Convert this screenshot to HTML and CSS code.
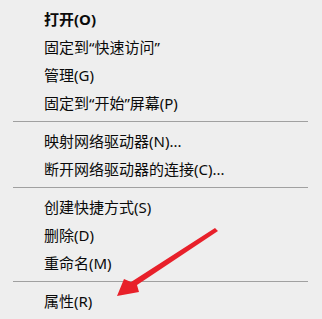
FILE: index.html
```html
<!DOCTYPE html>
<html lang="zh-CN">
  <head>
    <meta charset="UTF-8" />
    <meta name="viewport" content="width=device-width, initial-scale=1.0" />
    <title>右键菜单</title>
    <link rel="stylesheet" href="styles.css">
  </head>
  <body>
    <div class="menu">
      <div class="item bold">打开(O)</div>
      <div class="item">固定到“快速访问”</div>
      <div class="item">管理(G)</div>
      <div class="item">固定到“开始”屏幕(P)</div>
      <div class="separator"></div>
      <div class="item">映射网络驱动器(N)...</div>
      <div class="item">断开网络驱动器的连接(C)...</div>
      <div class="separator"></div>
      <div class="item">创建快捷方式(S)</div>
      <div class="item">删除(D)</div>
      <div class="item">重命名(M)</div>
      <div class="separator"></div>
      <div class="item">属性(R)</div>

      <!-- red annotation arrow -->
      <svg class="arrow" width="322" height="319" viewBox="0 0 322 319">
        <polygon fill="#e8202a"
          points="215,228 218,231 137,285 139,292 117,296 124,279 131,282" />
      </svg>
    </div>
  </body>
</html>
```

FILE: styles.css
```css
body {
  margin: 0;
  padding: 0;
  background-color: #eeeeee;
  font-family: "Noto Sans", "Noto Sans CJK SC", sans-serif;
}
.menu {
  position: relative;
  width: 322px;
  height: 319px;
  padding-top: 5px;
  box-sizing: border-box;
  background-color: #eeeeee;
  overflow: hidden;
}
.item {
  height: 28px;
  line-height: 28px;
  padding-left: 44px;
  font-size: 15px;
  color: #0a0a0a;
  white-space: nowrap;
}
.bold {
  font-weight: bold;
}
.separator {
  height: 1px;
  margin: 4px 14px 5px 13px;
  background-color: #a0a0a0;
}
.arrow {
  position: absolute;
  left: 0;
  top: 0;
}
```
